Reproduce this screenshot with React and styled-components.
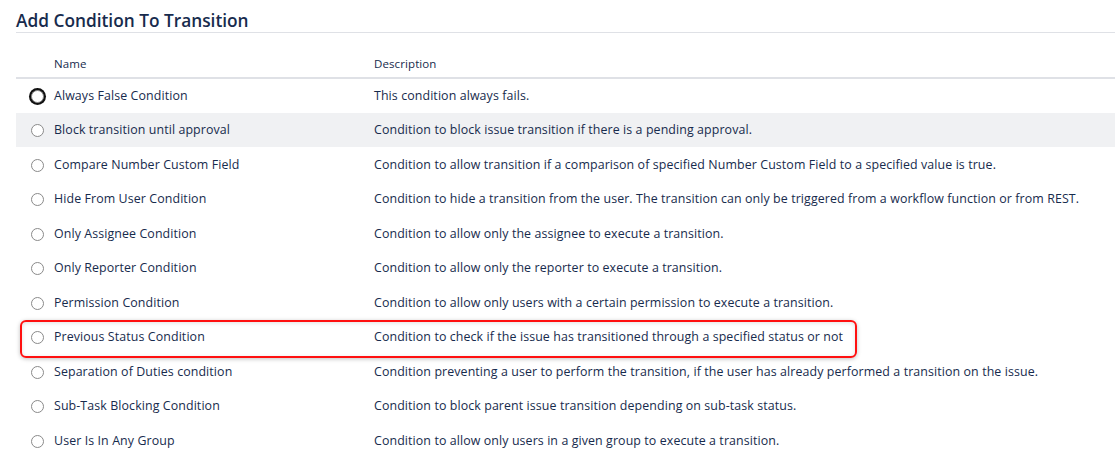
import React from "react";
import styled, { createGlobalStyle } from "styled-components";

const Global = createGlobalStyle`
  html, body { margin: 0; padding: 0; background: #fff; }
  body { font-family: "Open Sans", "Noto Sans", sans-serif; color: #172b4d; }
`;

const Page = styled.div`
  width: 1115px;
  height: 460px;
  overflow: hidden;
  padding-left: 16px;
  box-sizing: border-box;
`;

const Title = styled.h2`
  margin: 0;
  padding: 12px 0 3px;
  font-size: 17.3px;
  font-weight: 600;
  line-height: 17px;
  color: #172b4d;
  border-bottom: 1px solid #dfe1e6;
`;

const Table = styled.table`
  margin-top: 23px;
  width: 100%;
  border-collapse: collapse;
  font-size: 12.4px;
  letter-spacing: 0.1px;
`;

const HeadCell = styled.th`
  text-align: left;
  font-weight: 400;
  font-size: 11.5px;
  letter-spacing: 0.1px;
  padding: 0 0 6px 0;
  height: 20px;
  box-sizing: border-box;
  border-bottom: 2px solid #dfe1e6;
  width: ${(p) => p.$w || "auto"};
`;

const Row = styled.tr`
  height: 34.5px;
  background: ${(p) => (p.$hover ? "#f0f1f3" : "transparent")};
`;

const Cell = styled.td`
  padding: 0;
  vertical-align: middle;
  white-space: nowrap;
  position: relative;
`;

const Radio = styled.span`
  display: inline-block;
  box-sizing: border-box;
  width: 13px;
  height: 13px;
  margin-left: 15px;
  border-radius: 50%;
  background: #fff;
  border: 1px solid #8a8a8a;
  vertical-align: middle;
  box-shadow: ${(p) => (p.$focus ? "0 0 0 2px #111" : "none")};
`;

const Highlight = styled.div`
  position: absolute;
  left: 4px;
  top: 0;
  width: 837px;
  height: 38px;
  box-sizing: border-box;
  border: 2px solid #ff1010;
  border-radius: 6px;
  box-shadow: 0 1px 4px rgba(0, 0, 0, 0.25), inset 0 1px 4px rgba(0, 0, 0, 0.12);
  pointer-events: none;
`;

const rows = [
  ["Always False Condition", "This condition always fails."],
  ["Block transition until approval", "Condition to block issue transition if there is a pending approval."],
  ["Compare Number Custom Field", "Condition to allow transition if a comparison of specified Number Custom Field to a specified value is true."],
  ["Hide From User Condition", "Condition to hide a transition from the user. The transition can only be triggered from a workflow function or from REST."],
  ["Only Assignee Condition", "Condition to allow only the assignee to execute a transition."],
  ["Only Reporter Condition", "Condition to allow only the reporter to execute a transition."],
  ["Permission Condition", "Condition to allow only users with a certain permission to execute a transition."],
  ["Previous Status Condition", "Condition to check if the issue has transitioned through a specified status or not"],
  ["Separation of Duties condition", "Condition preventing a user to perform the transition, if the user has already performed a transition on the issue."],
  ["Sub-Task Blocking Condition", "Condition to block parent issue transition depending on sub-task status."],
  ["User Is In Any Group", "Condition to allow only users in a given group to execute a transition."],
];

export default function App() {
  return (
    <Page>
      <Global />
      <Title>Add Condition To Transition</Title>
      <Table>
        <thead>
          <tr>
            <HeadCell $w="38px" />
            <HeadCell $w="320px">Name</HeadCell>
            <HeadCell>Description</HeadCell>
          </tr>
        </thead>
        <tbody>
          {rows.map(([name, desc], i) => (
            <Row key={name} $hover={i === 1}>
              <Cell>
                {i === 7 && <Highlight />}
                <Radio $focus={i === 0} />
              </Cell>
              <Cell>{name}</Cell>
              <Cell>{desc}</Cell>
            </Row>
          ))}
        </tbody>
      </Table>
    </Page>
  );
}
